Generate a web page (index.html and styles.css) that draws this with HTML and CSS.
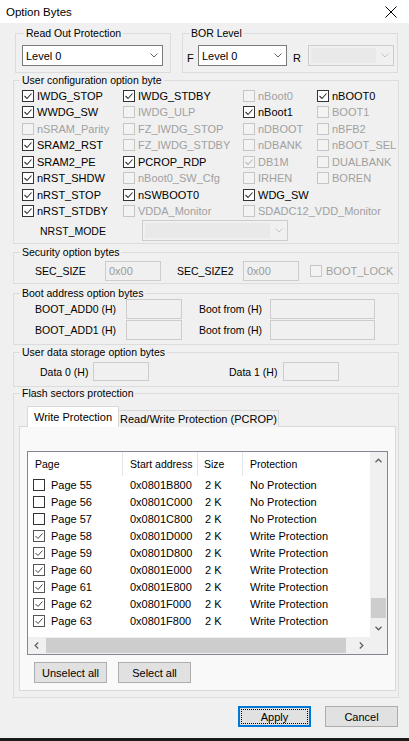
FILE: index.html
```html
<!DOCTYPE html>
<html lang="en">
<head>
<meta charset="utf-8">
<title>Option Bytes</title>
<link rel="stylesheet" href="styles.css">
</head>
<body>
<div class="window">
  <div class="titlebar">
    <span class="title">Option Bytes</span>
    <svg class="close" width="12" height="12" viewBox="0 0 12 12"><path d="M0.5 0.5 L11.5 11.5 M11.5 0.5 L0.5 11.5" stroke="#000" stroke-width="1" fill="none"/></svg>
  </div>

  <div class="content">
    <div class="toprow">
      <fieldset class="group rop">
        <legend>Read Out Protection</legend>
        <div class="combo w-rop"><span class="ctext">Level 0</span><span class="chev"><svg width="8" height="5" viewBox="0 0 8 5"><polyline points="0.5,0.5 4,4 7.5,0.5" fill="none" stroke="#606060" stroke-width="1"/></svg></span></div>
      </fieldset>
      <fieldset class="group bor">
        <legend>BOR Level</legend>
        <div class="borrow">
          <span class="lbl-f">F</span>
          <div class="combo w-borf"><span class="ctext">Level 0</span><span class="chev"><svg width="8" height="5" viewBox="0 0 8 5"><polyline points="0.5,0.5 4,4 7.5,0.5" fill="none" stroke="#606060" stroke-width="1"/></svg></span></div>
          <span class="lbl-r">R</span>
          <div class="combo disabled w-borr"><span class="cfield"></span><span class="chev"><svg width="8" height="5" viewBox="0 0 8 5"><polyline points="0.5,0.5 4,4 7.5,0.5" fill="none" stroke="#c4c4c4" stroke-width="1"/></svg></span></div>
        </div>
      </fieldset>
    </div>

    <fieldset class="group ucfg">
      <legend>User configuration option byte</legend>
      <div class="ucfg-grid">
        <label class="cb on"><span class="box"><svg viewBox="0 0 10 10" width="10" height="10"><path d="M1.5 5 L4 7.5 L8.5 2.5" fill="none" stroke="currentColor" stroke-width="1.1"/></svg></span><span class="txt">IWDG_STOP</span></label>
        <label class="cb on"><span class="box"><svg viewBox="0 0 10 10" width="10" height="10"><path d="M1.5 5 L4 7.5 L8.5 2.5" fill="none" stroke="currentColor" stroke-width="1.1"/></svg></span><span class="txt">IWDG_STDBY</span></label>
        <label class="cb dis"><span class="box"></span><span class="txt">nBoot0</span></label>
        <label class="cb on"><span class="box"><svg viewBox="0 0 10 10" width="10" height="10"><path d="M1.5 5 L4 7.5 L8.5 2.5" fill="none" stroke="currentColor" stroke-width="1.1"/></svg></span><span class="txt">nBOOT0</span></label>

        <label class="cb on"><span class="box"><svg viewBox="0 0 10 10" width="10" height="10"><path d="M1.5 5 L4 7.5 L8.5 2.5" fill="none" stroke="currentColor" stroke-width="1.1"/></svg></span><span class="txt">WWDG_SW</span></label>
        <label class="cb dis"><span class="box"></span><span class="txt">IWDG_ULP</span></label>
        <label class="cb on"><span class="box"><svg viewBox="0 0 10 10" width="10" height="10"><path d="M1.5 5 L4 7.5 L8.5 2.5" fill="none" stroke="currentColor" stroke-width="1.1"/></svg></span><span class="txt">nBoot1</span></label>
        <label class="cb dis"><span class="box"></span><span class="txt">BOOT1</span></label>

        <label class="cb dis"><span class="box"></span><span class="txt">nSRAM_Parity</span></label>
        <label class="cb dis"><span class="box"></span><span class="txt">FZ_IWDG_STOP</span></label>
        <label class="cb dis"><span class="box"></span><span class="txt">nDBOOT</span></label>
        <label class="cb dis"><span class="box"></span><span class="txt">nBFB2</span></label>

        <label class="cb on"><span class="box"><svg viewBox="0 0 10 10" width="10" height="10"><path d="M1.5 5 L4 7.5 L8.5 2.5" fill="none" stroke="currentColor" stroke-width="1.1"/></svg></span><span class="txt">SRAM2_RST</span></label>
        <label class="cb dis"><span class="box"></span><span class="txt">FZ_IWDG_STDBY</span></label>
        <label class="cb dis"><span class="box"></span><span class="txt">nDBANK</span></label>
        <label class="cb dis"><span class="box"></span><span class="txt">nBOOT_SEL</span></label>

        <label class="cb on"><span class="box"><svg viewBox="0 0 10 10" width="10" height="10"><path d="M1.5 5 L4 7.5 L8.5 2.5" fill="none" stroke="currentColor" stroke-width="1.1"/></svg></span><span class="txt">SRAM2_PE</span></label>
        <label class="cb on"><span class="box"><svg viewBox="0 0 10 10" width="10" height="10"><path d="M1.5 5 L4 7.5 L8.5 2.5" fill="none" stroke="currentColor" stroke-width="1.1"/></svg></span><span class="txt">PCROP_RDP</span></label>
        <label class="cb dis"><span class="box"><svg viewBox="0 0 10 10" width="10" height="10"><path d="M1.5 5 L4 7.5 L8.5 2.5" fill="none" stroke="currentColor" stroke-width="1.1"/></svg></span><span class="txt">DB1M</span></label>
        <label class="cb dis"><span class="box"></span><span class="txt">DUALBANK</span></label>

        <label class="cb on"><span class="box"><svg viewBox="0 0 10 10" width="10" height="10"><path d="M1.5 5 L4 7.5 L8.5 2.5" fill="none" stroke="currentColor" stroke-width="1.1"/></svg></span><span class="txt">nRST_SHDW</span></label>
        <label class="cb dis"><span class="box"></span><span class="txt">nBoot0_SW_Cfg</span></label>
        <label class="cb dis"><span class="box"></span><span class="txt">IRHEN</span></label>
        <label class="cb dis"><span class="box"></span><span class="txt">BOREN</span></label>

        <label class="cb on"><span class="box"><svg viewBox="0 0 10 10" width="10" height="10"><path d="M1.5 5 L4 7.5 L8.5 2.5" fill="none" stroke="currentColor" stroke-width="1.1"/></svg></span><span class="txt">nRST_STOP</span></label>
        <label class="cb on"><span class="box"><svg viewBox="0 0 10 10" width="10" height="10"><path d="M1.5 5 L4 7.5 L8.5 2.5" fill="none" stroke="currentColor" stroke-width="1.1"/></svg></span><span class="txt">nSWBOOT0</span></label>
        <label class="cb on"><span class="box"><svg viewBox="0 0 10 10" width="10" height="10"><path d="M1.5 5 L4 7.5 L8.5 2.5" fill="none" stroke="currentColor" stroke-width="1.1"/></svg></span><span class="txt">WDG_SW</span></label>
        <span></span>

        <label class="cb on"><span class="box"><svg viewBox="0 0 10 10" width="10" height="10"><path d="M1.5 5 L4 7.5 L8.5 2.5" fill="none" stroke="currentColor" stroke-width="1.1"/></svg></span><span class="txt">nRST_STDBY</span></label>
        <label class="cb dis"><span class="box"></span><span class="txt">VDDA_Monitor</span></label>
        <label class="cb dis span2"><span class="box"></span><span class="txt">SDADC12_VDD_Monitor</span></label>

        <div class="nrst">
          <span class="nrst-lbl">NRST_MODE</span>
          <div class="combo disabled w-nrst"><span class="cfield"></span><span class="chev"><svg width="8" height="5" viewBox="0 0 8 5"><polyline points="0.5,0.5 4,4 7.5,0.5" fill="none" stroke="#c4c4c4" stroke-width="1"/></svg></span></div>
        </div>
      </div>
    </fieldset>

    <fieldset class="group sec">
      <legend>Security option bytes</legend>
      <div class="row h20 pl21">
        <span class="lbl w70">SEC_SIZE</span>
        <span class="tb w56">0x00</span>
        <span class="lbl w66 ml16">SEC_SIZE2</span>
        <span class="tb w56">0x00</span>
        <label class="cb dis ml11"><span class="box"></span><span class="txt">BOOT_LOCK</span></label>
      </div>
    </fieldset>

    <fieldset class="group boot">
      <legend>Boot address option bytes</legend>
      <div class="row h20 pl21">
        <span class="lbl w91">BOOT_ADD0 (H)</span>
        <span class="tb w56"></span>
        <span class="lbl w71 ml17">Boot from (H)</span>
        <span class="tb w105"></span>
      </div>
      <div class="row h20 mt1 pl21">
        <span class="lbl w91">BOOT_ADD1 (H)</span>
        <span class="tb w56"></span>
        <span class="lbl w71 ml17">Boot from (H)</span>
        <span class="tb w105"></span>
      </div>
    </fieldset>

    <fieldset class="group udata">
      <legend>User data storage option bytes</legend>
      <div class="row h19 pl26">
        <span class="lbl w53">Data 0 (H)</span>
        <span class="tb w56 h19"></span>
        <span class="lbl w54 ml80">Data 1 (H)</span>
        <span class="tb w56 h19"></span>
      </div>
    </fieldset>

    <fieldset class="group flash">
      <legend>Flash sectors protection</legend>
      <div class="tabs">
        <div class="tab sel">Write Protection</div>
        <div class="tab">Read/Write Protection (PCROP)</div>
      </div>
      <div class="panel">
        <div class="list">
          <div class="lbody">
            <div class="lhead">
              <div class="hc c1h">Page</div>
              <div class="hc c2h">Start address</div>
              <div class="hc c3h">Size</div>
              <div class="hc c4h">Protection</div>
            </div>
            <div class="lrow"><div class="c1"><span class="box lb"></span>Page 55</div><div class="c2">0x0801B800</div><div class="c3">2 K</div><div class="c4">No Protection</div></div>
            <div class="lrow"><div class="c1"><span class="box lb"></span>Page 56</div><div class="c2">0x0801C000</div><div class="c3">2 K</div><div class="c4">No Protection</div></div>
            <div class="lrow"><div class="c1"><span class="box lb"></span>Page 57</div><div class="c2">0x0801C800</div><div class="c3">2 K</div><div class="c4">No Protection</div></div>
            <div class="lrow"><div class="c1"><span class="box lb lon"><svg viewBox="0 0 10 10" width="10" height="10"><path d="M1.5 5 L4 7.5 L8.5 2.5" fill="none" stroke="currentColor" stroke-width="1"/></svg></span>Page 58</div><div class="c2">0x0801D000</div><div class="c3">2 K</div><div class="c4">Write Protection</div></div>
            <div class="lrow"><div class="c1"><span class="box lb lon"><svg viewBox="0 0 10 10" width="10" height="10"><path d="M1.5 5 L4 7.5 L8.5 2.5" fill="none" stroke="currentColor" stroke-width="1"/></svg></span>Page 59</div><div class="c2">0x0801D800</div><div class="c3">2 K</div><div class="c4">Write Protection</div></div>
            <div class="lrow"><div class="c1"><span class="box lb lon"><svg viewBox="0 0 10 10" width="10" height="10"><path d="M1.5 5 L4 7.5 L8.5 2.5" fill="none" stroke="currentColor" stroke-width="1"/></svg></span>Page 60</div><div class="c2">0x0801E000</div><div class="c3">2 K</div><div class="c4">Write Protection</div></div>
            <div class="lrow"><div class="c1"><span class="box lb lon"><svg viewBox="0 0 10 10" width="10" height="10"><path d="M1.5 5 L4 7.5 L8.5 2.5" fill="none" stroke="currentColor" stroke-width="1"/></svg></span>Page 61</div><div class="c2">0x0801E800</div><div class="c3">2 K</div><div class="c4">Write Protection</div></div>
            <div class="lrow"><div class="c1"><span class="box lb lon"><svg viewBox="0 0 10 10" width="10" height="10"><path d="M1.5 5 L4 7.5 L8.5 2.5" fill="none" stroke="currentColor" stroke-width="1"/></svg></span>Page 62</div><div class="c2">0x0801F000</div><div class="c3">2 K</div><div class="c4">Write Protection</div></div>
            <div class="lrow"><div class="c1"><span class="box lb lon"><svg viewBox="0 0 10 10" width="10" height="10"><path d="M1.5 5 L4 7.5 L8.5 2.5" fill="none" stroke="currentColor" stroke-width="1"/></svg></span>Page 63</div><div class="c2">0x0801F800</div><div class="c3">2 K</div><div class="c4">Write Protection</div></div>
          </div>
          <div class="vscroll">
            <span class="arr"><svg width="7" height="5" viewBox="0 0 7 5"><polyline points="0.5,4.2 3.5,1.2 6.5,4.2" fill="none" stroke="#606060" stroke-width="1.3"/></svg></span>
            <span class="vtrack"><span class="vthumb"></span></span>
            <span class="arr"><svg width="7" height="5" viewBox="0 0 7 5"><polyline points="0.5,0.8 3.5,3.8 6.5,0.8" fill="none" stroke="#606060" stroke-width="1.3"/></svg></span>
          </div>
          <div class="hscroll">
            <span class="arr"><svg width="5" height="7" viewBox="0 0 5 7"><polyline points="4.2,0.5 1.2,3.5 4.2,6.5" fill="none" stroke="#606060" stroke-width="1.3"/></svg></span>
            <span class="htrack"><span class="hthumb"></span></span>
            <span class="arr"><svg width="5" height="7" viewBox="0 0 5 7"><polyline points="0.8,0.5 3.8,3.5 0.8,6.5" fill="none" stroke="#606060" stroke-width="1.3"/></svg></span>
          </div>
          <div class="corner"></div>
        </div>
        <div class="btnrow">
          <span class="btn">Unselect all</span>
          <span class="btn">Select all</span>
        </div>
      </div>
    </fieldset>

    <div class="footer">
      <span class="btn apply"><span class="focus">Apply</span></span>
      <span class="btn">Cancel</span>
    </div>
  </div>
</div>
<div class="screen-edge"></div>
</body>
</html>
```

FILE: styles.css
```css
* { box-sizing: border-box; }
html, body { margin: 0; padding: 0; }
body {
  width: 409px;
  height: 741px;
  overflow: hidden;
  background: #f0f0f0;
  font-family: "Liberation Sans", Arial, sans-serif;
  font-size: 10.5px;
  line-height: 12px;
  color: #000;
}
.window { height: 738px; display: flex; flex-direction: column; overflow: hidden; }
.screen-edge { height: 3px; background: #1a1a1a; }

.titlebar {
  height: 23px;
  flex: none;
  background: #fff;
  display: flex;
  align-items: center;
  justify-content: space-between;
  padding: 0 12px 0 6px;
}
.title { font-size: 11.5px; line-height: 14px; }
.close { display: block; margin-top: 1px; }

.content { padding: 4px 10px 0 13px; display: flex; flex-direction: column; }

.group { margin: 0; padding: 0; border: 1px solid #dcdcdc; min-width: 0; }
.group > legend { padding: 0 2px; margin-left: 6px; line-height: 12px; font-size: 10.5px; }

/* top row */
.toprow { display: flex; padding-left: 2px; gap: 11px; }
.rop { width: 156px; padding: 6px 6px 6px 0; }
.rop > legend { margin-left: 8px; }
.rop .combo { margin-left: 6px; }
.bor { width: 216px; padding: 6px 3px 6px 0; }
.borrow { display: flex; align-items: center; padding-left: 4px; }
.lbl-f { width: 11px; padding-top: 5px; font-size: 11px; }
.lbl-r { width: 15px; margin-left: 6px; padding-top: 5px; font-size: 11px; }

.combo {
  height: 21px;
  border: 1px solid #7a7a7a;
  background: #fff;
  display: flex;
  align-items: center;
  flex: none;
}
.combo .ctext { flex: 1; padding-left: 3px; font-size: 11px; }
.combo .chev { width: 17px; height: 100%; display: flex; align-items: center; justify-content: center; flex: none; }
.combo .chev svg { display: block; }
.combo.disabled { border-color: #cccccc; background: #f0f0f0; }
.combo.disabled .cfield { flex: 1; align-self: stretch; margin: 2px 0 2px 2px; background: #e9e9e9; }
.w-rop { width: 141px; }
.w-borf { width: 89px; }
.w-borr { width: 86px; }
.w-nrst { width: 146px; }

/* user configuration */
.ucfg { margin-top: 1px; padding: 1px 0 1px 0; }
.ucfg-grid {
  display: grid;
  padding-left: 8px;
  grid-template-columns: 101px 120px 74px 1fr;
  grid-template-rows: 17px 16px 17px 16px 17px 16px 17px 16px 23px;
}
.cb { display: flex; align-items: center; white-space: nowrap; font-size: 11px; }
.cb.span2 { grid-column: span 2; }
.box {
  width: 12px;
  height: 12px;
  border: 1px solid #333;
  background: #fff;
  color: #333;
  margin-right: 3px;
  flex: none;
  display: flex;
  align-items: center;
  justify-content: center;
}
.box svg { display: block; }
.cb.dis .box { border-color: #c6c6c6; background: #f3f3f3; color: #b8b8b8; }
.cb.dis .txt { color: #a0a0a0; }
.nrst { grid-column: 1 / -1; display: flex; align-items: center; padding-left: 18px; }
.nrst-lbl { width: 102px; font-size: 10.5px; }

/* generic rows */
.row { display: flex; align-items: center; }
.pl21 { padding-left: 21px; }
.pl26 { padding-left: 26px; }
.h20 { height: 20px; }
.h19 { height: 19px; }
.mt1 { margin-top: 1px; }
.lbl { flex: none; white-space: nowrap; }
.tb {
  flex: none;
  height: 20px;
  border: 1px solid #cccccc;
  background: #f0f0f0;
  color: #9a9a9a;
  padding-left: 3px;
  display: flex;
  align-items: center;
  font-size: 11px;
}
.tb.h19 { height: 19px; }
.w53 { width: 53px; } .w54 { width: 54px; } .w56 { width: 56px; }
.w66 { width: 66px; } .w70 { width: 70px; } .w71 { width: 71px; }
.w91 { width: 91px; } .w105 { width: 105px; }
.ml11 { margin-left: 11px; } .ml16 { margin-left: 16px; }
.ml17 { margin-left: 17px; } .ml80 { margin-left: 80px; }

.sec { margin-top: 2px; padding: 3px 0 2px 0; }
.sec .cb .box { margin-right: 4px; }
.boot { margin-top: 3px; padding: 0 0 4px 0; }
.udata { margin-top: 1px; padding: 4px 0 5px 0; }

/* flash */
.flash { padding: 8px 0 6px 0; }
.tabs {
  display: flex;
  align-items: flex-end;
  height: 20px;
  margin-left: 13px;
  margin-bottom: -1px;
  position: relative;
  z-index: 1;
}
.tab {
  height: 17px;
  border: 1px solid #d9d9d9;
  border-bottom: none;
  background: #f0f0f0;
  display: flex;
  align-items: center;
  justify-content: center;
  white-space: nowrap;
  font-size: 11px;
  width: 161px;
  margin-left: -1px;
}
.tab.sel { height: 21px; width: 92px; margin-left: 0; background: #fff; padding-bottom: 1px; }

.panel {
  width: 377px;
  margin-left: 5px;
  border: 1px solid #d9d9d9;
  background: #f9f9f9;
  padding: 24px 0 7px 7px;
}
.list {
  width: 361px;
  height: 204px;
  border: 1px solid #828790;
  background: #fff;
  display: grid;
  grid-template-columns: 1fr 17px;
  grid-template-rows: 1fr 17px;
}
.lbody { overflow: hidden; }
.lhead { display: flex; height: 24px; }
.hc { height: 24px; display: flex; align-items: center; border-right: 1px solid #e5e5e5; padding-left: 7px; white-space: nowrap; }
.c1h { width: 95px; }
.c2h { width: 75px; }
.c3h { width: 45px; padding-left: 6px; }
.c4h { flex: 1; border-right: none; }
.lrow { display: flex; height: 17px; align-items: center; font-size: 11px; white-space: nowrap; }
.c1 { width: 95px; display: flex; align-items: center; padding-left: 5px; }
.c2 { width: 75px; padding-left: 7px; }
.c3 { width: 45px; padding-left: 7px; }
.c4 { padding-left: 7px; }
.box.lb { margin-right: 6px; border-color: #333; }
.box.lon { border-color: #555; color: #444; }

.vscroll { background: #f0f0f0; display: flex; flex-direction: column; }
.arr { flex: none; width: 17px; height: 17px; display: flex; align-items: center; justify-content: center; }
.arr svg { display: block; }
.vtrack { flex: 1; display: flex; flex-direction: column; }
.vthumb { margin: 129px 0 0 1px; width: 15px; height: 20px; background: #cdcdcd; }
.hscroll { background: #f0f0f0; display: flex; }
.htrack { flex: 1; display: flex; align-items: center; }
.hthumb { margin-left: 1px; width: 300px; height: 15px; background: #cdcdcd; }
.corner { background: #f0f0f0; }

.btnrow { display: flex; gap: 11px; margin-top: 7px; padding-left: 7px; }
.btn {
  width: 73px;
  height: 21px;
  background: #e1e1e1;
  border: 1px solid #adadad;
  display: flex;
  align-items: center;
  justify-content: center;
  font-size: 11px;
  flex: none;
}

.footer { display: flex; justify-content: flex-end; gap: 14px; margin-top: 8px; padding-right: 1px; }
.btn.apply { border: 1px solid #0078d7; box-shadow: inset 0 0 0 1px #0078d7; padding: 2px; }
.btn.apply .focus {
  width: 100%;
  height: 100%;
  border: 1px dotted #000;
  display: flex;
  align-items: center;
  justify-content: center;
}
```
